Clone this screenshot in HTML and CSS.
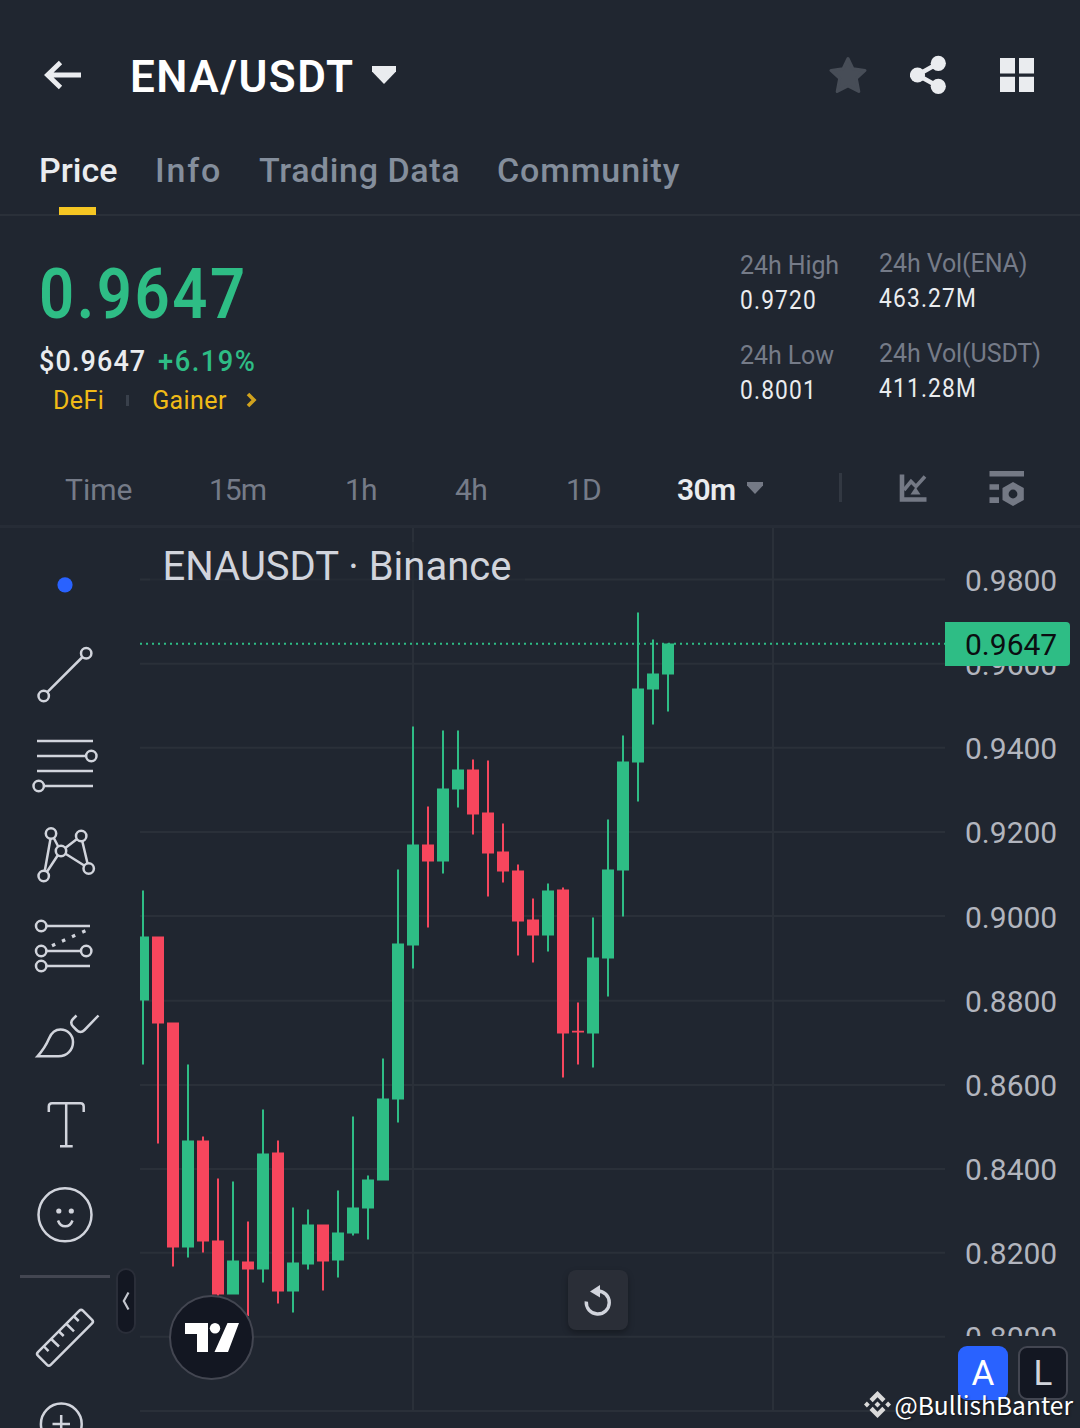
FILE: index.html
```html
<!DOCTYPE html>
<html lang="en">
<head>
<meta charset="utf-8">
<title>ENA/USDT</title>
<link rel="stylesheet" href="styles.css">
</head>
<body>
<div class="app">
  <header class="topbar">
    <svg class="back" width="40" height="32" viewBox="43 59 40 32"><path d="M60.500 62.500L47.500 75L60.500 87.500M48 75H81" fill="none" stroke="#eaecef" stroke-width="4.800"/></svg>
    <h1 class="pair">ENA/USDT</h1>
    <svg class="caret" width="24" height="18" viewBox="0 0 24 18"><path d="M0 0H24V5.500L12 18L0 5.500Z" fill="#eaecef"/></svg>
    <div class="actions">
      <svg width="38" height="40" viewBox="0 0 38 40"><path d="M19 3.500L24 13.800L36 15.400L27.300 23.300L29.800 36.500L19 31L8.200 36.500L10.700 23.300L2 15.400L14 13.800Z" fill="#474d57" stroke="#474d57" stroke-width="3" stroke-linejoin="round"/></svg>
      <svg width="37" height="40" viewBox="910 55 37 40"><path d="M938.300 63.300L917.500 75L938.300 86.500" fill="none" stroke="#eaecef" stroke-width="4.500"/><g fill="#eaecef"><circle cx="917.500" cy="75" r="7.600"/><circle cx="938.300" cy="63.300" r="7.600"/><circle cx="938.300" cy="86.300" r="7.600"/></g></svg>
      <svg width="34" height="34" viewBox="0 0 34 34"><path d="M0 0H15V15.500H0ZM19 0H34V15.500H19ZM0 18.800H15V34H0ZM19 18.800H34V34H19Z" fill="#eaecef"/></svg>
    </div>
  </header>

  <nav class="tabs">
    <a class="tab tab-price active">Price</a>
    <a class="tab tab-info">Info</a>
    <a class="tab tab-data">Trading Data</a>
    <a class="tab tab-community">Community</a>
  </nav>

  <section class="ticker">
    <div class="quote">
      <div class="last">0.9647</div>
      <div class="fiat"><span class="usd">$0.9647</span><span class="change">+6.19%</span></div>
      <div class="tags"><span class="tag">DeFi</span><i class="tag-sep"></i><span class="tag">Gainer</span>
        <svg width="11" height="16" viewBox="0 0 11 16"><path d="M2 2L8 8L2 14" fill="none" stroke="#d0a21e" stroke-width="3.600"/></svg>
      </div>
    </div>
    <dl class="stats stats-range">
      <dt>24h High</dt><dd>0.9720</dd>
      <dt>24h Low</dt><dd>0.8001</dd>
    </dl>
    <dl class="stats stats-volume">
      <dt>24h Vol(ENA)</dt><dd>463.27M</dd>
      <dt>24h Vol(USDT)</dt><dd>411.28M</dd>
    </dl>
  </section>

  <div class="intervals">
    <span class="iv iv-time">Time</span>
    <span class="iv iv-15m">15m</span>
    <span class="iv iv-1h">1h</span>
    <span class="iv iv-4h">4h</span>
    <span class="iv iv-1d">1D</span>
    <span class="iv iv-30m">30m</span>
    <svg class="iv-caret" width="16" height="12" viewBox="0 0 16 12"><path d="M0 0H16V3.500L8 12L0 3.500Z" fill="#747985"/></svg>
    <i class="iv-sep"></i>
    <svg class="iv-chart" width="28" height="28" viewBox="899 473 28 28"><path d="M902 473.500V498.500H926.500" fill="none" stroke="#747985" stroke-width="4.600"/><path d="M904 489L911 480.500L916 485.500L925 475.500" fill="none" stroke="#747985" stroke-width="3.600"/><path d="M910.500 493.500L915.500 486L920.500 493.500Z" fill="#747985"/></svg>
    <svg width="35" height="36" viewBox="989 470 35 36"><path d="M989.500 471H1024V476.500H989.500ZM989.500 484.200H999V489.700H989.500ZM989.500 497.300H999V503H989.500Z" fill="#747985"/><path d="M1013 482L1023.800 488V500L1013 506L1002.500 500V488ZM1013 489.600A4.400 4.400 0 1 0 1013 498.400A4.400 4.400 0 1 0 1013 489.600Z" fill="#747985" fill-rule="evenodd"/></svg>
  </div>

  <main class="board">
    <aside class="tools">
      <svg viewBox="20 540 90 90"><circle cx="65" cy="584.800" r="7.600" fill="#2962ff"/></svg>
      <svg viewBox="20 630 90 90"><path d="M47.300 692.200L82.500 657"/><circle cx="43.700" cy="696" r="5.200"/><circle cx="86.200" cy="653.300" r="5.200"/></svg>
      <svg viewBox="20 720 90 90"><path d="M37 741H93M37 756H86M37 771H93M44 786H93"/><circle cx="91.300" cy="756" r="5.200"/><circle cx="38.700" cy="786" r="5.200"/></svg>
      <svg viewBox="20 810 90 90"><path d="M50.500 838.700L44.800 870.700M53.800 838L58.200 846.500M65.300 848L77 839M82.300 841.200L87.500 863.200M65.500 853.700L84.200 865.500M57.800 855.200L47 871.700"/><circle cx="51" cy="833.500" r="5.200"/><circle cx="81.200" cy="836" r="5.200"/><circle cx="61" cy="851" r="5.200"/><circle cx="43.700" cy="876" r="5.200"/><circle cx="88.700" cy="868.500" r="5.200"/></svg>
      <svg viewBox="20 900 90 90"><path d="M46.500 926H90M46.500 951H81M46.500 966H90"/><path d="M52 945.800L55.200 944.300M62 941.200L65.200 939.700M72 936.800L75.200 935.300M82.200 932.200L85.400 930.700" stroke-width="3.200"/><circle cx="41.200" cy="926" r="5.200"/><circle cx="41.200" cy="951" r="5.200"/><circle cx="41.200" cy="966" r="5.200"/><circle cx="86.200" cy="951" r="5.200"/></svg>
      <svg viewBox="20 990 90 90"><path d="M37.500 1056.300C44 1049 46.500 1044.500 49 1038.500C51.500 1032.500 55.500 1029.500 60.500 1029.500C67.500 1029.500 73 1035 73 1042C73 1050 67 1056.300 58.500 1056.300Z"/><path d="M76.500 1015.500L73 1019Q69.500 1022.500 73 1026.500L76.500 1030Q80.500 1034 84.500 1030L98.500 1015.500"/></svg>
      <svg viewBox="20 1080 90 90"><path d="M48.800 1112V1106.500Q48.800 1103.200 52 1103.200H80.500Q83.700 1103.200 83.700 1106.500V1112M66.200 1103.200V1146M60 1146.200H72.700"/></svg>
      <svg viewBox="20 1170 90 90"><circle cx="65" cy="1214.800" r="26.500"/><g class="dot"><circle cx="58.800" cy="1211" r="2.600"/><circle cx="71.300" cy="1211" r="2.600"/></g><path d="M58 1220.500Q60 1226.300 65.200 1226.300Q70.500 1226.300 72.500 1220.500"/></svg>
      <hr class="tools-rule">
      <svg class="ruler" viewBox="20 1293 90 90"><rect x="-31.800" y="-9" width="63.600" height="18" rx="2.500" transform="translate(65 1337.800) rotate(-45)"/><path d="M44 1346.500L48.500 1351.200M51.200 1339L59 1346.500M59 1331.500L63.700 1336M66.500 1324L74 1331.300M74 1316.500L78.700 1321"/></svg>
      <svg class="zoom-in" viewBox="20 1383 90 45"><circle cx="61.300" cy="1424" r="20.400"/><path d="M52.500 1424H70M61.200 1415V1428"/></svg>
      <div class="handle"><svg viewBox="0 0 8 20"><path d="M6.500 1.500L1.800 10L6.500 18.500"/></svg></div>
    </aside>

    <section class="plot">
      <svg width="805" height="900" viewBox="140 528 805 900">
        <path class="grid" d="M140 579.500H945M140 663.700H945M140 747.800H945M140 832H945M140 916.100H945M140 1000.800H945M140 1084.900H945M140 1169H945M140 1252.800H945M140 1336.800H945M140 1411H945M413 528V1411M773 528V1411"/>
        <path class="wick up" d="M143 890.500V1064.500M188 1064.500V1257.500M233 1181.500V1294M263 1109.500V1282.500M293 1207.500V1312.500M308 1209.500V1269.500M338 1190.500V1277.500M353 1116.500V1235.500M368 1175.500V1239.500M383 1058.500V1180M398 869.500V1122.500M413 726.500V968.500M443 730.500V873.500M458 730.500V807.500M548 883.500V951.500M593 917.500V1067.500M608 819.500V996.500M623 735.500V916.500M638 612.500V801.500M653 639.500V724.500M668 643.500V711.500"/>
        <path class="wick down" d="M158 937V1143.500M173 1023V1266.500M203 1136.500V1252.500M218 1178.500V1295.500M248 1221.500V1316M278 1140.500V1303.500M323 1225V1290.500M428 806.500V927.500M473 759.500V834.500M488 760.500V896.500M503 823.500V882.500M518 864.500V955.500M533 898.500V962.500M563 887.500V1077.500M578 1002.500V1064.500"/>
        <path class="candle up" d="M143 936.500V1000.500M188 1140.500V1247.500M233 1260.500V1294.500M263 1153.500V1269.500M293 1262.500V1291.500M308 1224.500V1264.500M338 1232.500V1260.500M353 1207.500V1233.500M368 1179.500V1208.500M383 1098.500V1180.500M398 943.500V1099.500M413 844.500V945.500M443 788.500V861.500M458 769.500V789.500M548 890.500V935.500M593 957.500V1033.500M608 869.500V958.500M623 761.500V870.500M638 688.500V762.500M653 673.500V689.500M668 643.500V674.500"/>
        <path class="candle down" d="M158 936.500V1023.500M173 1022.500V1247.500M203 1140.500V1241.500M218 1240.500V1294.500M248 1261.500V1269.500M278 1152.500V1291.500M323 1224.500V1261.500M428 844.500V861.500M473 769.500V814.500M488 812.500V853.500M503 851.500V871.500M518 870.500V921.500M533 919.500V935.500M563 889.500V1033.500M578 1030.800V1032.600"/>
        <path class="last-line" d="M140 643.700H945"/>
      </svg>
      <div class="legend">ENAUSDT · Binance</div>
      <div class="tv"><svg width="54" height="29" viewBox="0 0 54 29"><path d="M0 0H23V29H12V11H0ZM42.500 0H54L43 29H29.500Z"/><circle cx="30" cy="5.300" r="5.200"/></svg></div>
      <div class="reset"><svg width="30" height="34" viewBox="583 1283 30 34"><path d="M586.300 1301.500A11.500 11.500 0 1 0 597.500 1291" fill="none" stroke="#d1d4dc" stroke-width="3.400"/><path d="M590 1291.500L600 1285V1297.500Z" fill="#d1d4dc"/></svg></div>
    </section>

    <aside class="axis">
      <ol class="prices">
        <li>0.9800</li><li>0.9600</li><li>0.9400</li><li>0.9200</li><li>0.9000</li><li>0.8800</li><li>0.8600</li><li>0.8400</li><li>0.8200</li><li>0.8000</li>
      </ol>
      <div class="last-tag">0.9647</div>
      <div class="scale"><span class="key key-auto">A</span><span class="key key-log">L</span></div>
    </aside>
  </main>

  <div class="credit">
    <svg width="27" height="27" viewBox="0 0 28 28"><path d="M14 0L22.300 8.300L19 11.600L14 6.600L9 11.600L5.700 8.300ZM14 28L5.700 19.700L9 16.400L14 21.400L19 16.400L22.300 19.700ZM14 10.900L17.100 14L14 17.100L10.900 14ZM3 11L6 14L3 17L0 14ZM25 11L28 14L25 17L22 14Z" fill="#dadada"/></svg>
    <span>@BullishBanter</span>
  </div>
</div>
</body>
</html>
```
FILE: styles.css
```css
* { box-sizing: border-box; margin: 0; padding: 0; }
body { background: #202630; font-family: Roboto, "Liberation Sans", sans-serif; color: #eaecef; }
svg { display: block; flex: none; }
.app { position: relative; width: 1080px; height: 1428px; overflow: hidden; display: flex; flex-direction: column; }

.topbar { height: 150px; padding: 0 46px 0 43px; display: flex; align-items: center; }
.pair { margin-left: 47px; width: 242px; font-size: 44px; font-weight: 600; letter-spacing: 1.5px; line-height: 52px; color: #fff; white-space: nowrap; padding-top: 4px; }
.actions { margin-left: auto; display: flex; align-items: center; }
.actions svg + svg { margin-left: 43px; }
.actions svg:last-child { margin-left: 53px; }

.tabs { height: 66px; padding-left: 39px; display: flex; border-bottom: 2px solid #2a3039; }
.tab { position: relative; height: 65px; line-height: 40px; font-size: 34px; font-weight: 500; color: #848e9c; white-space: nowrap; }
.tab-price { width: 116px; }
.tab-info { width: 104px; letter-spacing: 1.8px; }
.tab-data { width: 238px; letter-spacing: .6px; }
.tab-community { letter-spacing: .9px; }
.active { color: #eaecef; }
.active::after { content: ""; position: absolute; left: 20px; bottom: 0; width: 37px; height: 8px; background: #f5c623; }

.ticker { height: 234px; padding-left: 39px; display: flex; }
.quote { width: 701px; padding-top: 37px; }
.last { height: 82px; line-height: 82px; font-size: 70px; font-weight: 600; letter-spacing: 2.9px; color: #2ebd85; transform: scaleX(.88); transform-origin: left; }
.fiat { display: flex; height: 44px; line-height: 52px; font-size: 29px; font-weight: 500; }
.usd { width: 119px; letter-spacing: 1.2px; transform: scaleX(.93); transform-origin: left; }
.change { color: #2ebd85; letter-spacing: 1.6px; transform: scaleX(.94); transform-origin: left; }
.tags { display: flex; align-items: center; height: 42px; padding-left: 14px; font-size: 25px; letter-spacing: .4px; color: #f0bb17; }
.tag-sep { width: 3px; height: 11px; margin: 0 23px 0 22px; background: #39404b; }
.tags svg { margin-left: 19px; }
.stats { line-height: 35px; font-size: 25px; }
.stats-range { width: 139px; padding-top: 32px; }
.stats-volume { padding-top: 30px; }
.stats dt { color: #757b88; white-space: nowrap; letter-spacing: -.1px; }
.stats dd { margin-bottom: 20px; color: #eaecef; letter-spacing: 1.3px; transform: scaleX(.91); transform-origin: left; }

.intervals { height: 78px; padding: 0 56px 0 65px; display: flex; align-items: center; border-bottom: 3px solid #262c36; font-size: 30px; color: #757b88; }
.iv { line-height: 40px; padding-top: 4px; }
.iv-time { width: 144px; }
.iv-15m { width: 136px; letter-spacing: -1px; }
.iv-1h { width: 110px; letter-spacing: -.8px; }
.iv-4h { width: 111px; letter-spacing: -.5px; }
.iv-1d { width: 111px; letter-spacing: -.8px; }
.iv-30m { width: 70px; font-weight: 600; letter-spacing: -.7px; color: #eaecef; }
.iv-sep { width: 3px; height: 29px; margin-left: 76px; background: #323842; }
.iv-chart { margin: 0 62px 0 57px; }

.board { height: 900px; display: grid; grid-template-columns: 140px 805px 135px; }
.tools { position: relative; padding: 12px 0 0 20px; overflow: hidden; }
.tools > svg { width: 90px; height: 90px; fill: none; stroke: #d1d4dc; stroke-width: 2.5; }
.tools > svg:first-child, .tools .dot { stroke: none; }
.tools .dot { fill: #d1d4dc; }
.tools > .zoom-in { height: 45px; }
.tools-rule { width: 90px; height: 3px; margin: 15px 0; border: 0; background: #434651; }
.handle { position: absolute; left: 116px; top: 740px; width: 20px; height: 66px; display: grid; place-items: center; border: 2px solid #2a2e39; border-radius: 10px; background: #131722; }
.handle svg { width: 8px; height: 20px; fill: none; stroke: #c3c6ce; stroke-width: 2.2; }

.plot { position: relative; }
.grid { fill: none; stroke: #2a3039; stroke-width: 2; }
.wick { fill: none; stroke-width: 2; }
.candle { fill: none; stroke-width: 12; }
.up { stroke: #2ebd85; }
.down { stroke: #f6465d; }
.last-line { stroke: #2ebd85; stroke-width: 2; stroke-dasharray: 2 4; }
.legend { position: absolute; left: 10px; top: 14px; width: 375px; height: 48px; padding-left: 12.500px; line-height: 49px; font-size: 40px; color: #d1d4dc; background: rgba(32, 38, 48, .5); white-space: nowrap; }
.tv { position: absolute; left: 29px; top: 767px; width: 85px; height: 85px; display: grid; place-items: center; border: 2px solid #434651; border-radius: 50%; background: #131722; }
.tv svg { fill: #fff; }
.reset { position: absolute; left: 428px; top: 742px; width: 60px; height: 60px; display: grid; place-items: center; border-radius: 8px; background: #2a2e37; box-shadow: 0 3px 6px rgba(0, 0, 0, .3); }

.axis { position: relative; }
.prices { height: 808px; padding: 10px 0 0 20px; overflow: hidden; list-style: none; font-size: 30px; color: #b2b5be; }
.prices li { height: 84.15px; line-height: 85px; }
.last-tag { position: absolute; left: 0; top: 94px; width: 125px; height: 44px; padding-left: 20px; line-height: 45px; font-size: 30px; color: #0b0e11; background: #2ebd85; border-radius: 0 4px 4px 0; }
.scale { display: flex; gap: 10px; padding: 10px 0 0 13px; }
.key { width: 50px; height: 54px; line-height: 55px; text-align: center; font-size: 35px; border-radius: 9px; }
.key-auto { background: #2962ff; color: #fff; }
.key-log { line-height: 51px; border: 2px solid #434651; background: #131722; color: #d1d4dc; }

.credit { position: absolute; right: 7px; bottom: 7px; display: flex; align-items: center; gap: 3px; font-family: "Noto Sans CJK SC", sans-serif; font-size: 24.600px; line-height: 34px; color: #fff; text-shadow: 1px 1px 2px rgba(0, 0, 0, .5); }
```
